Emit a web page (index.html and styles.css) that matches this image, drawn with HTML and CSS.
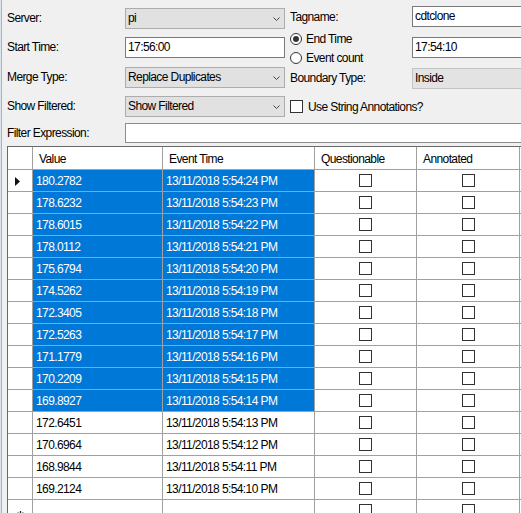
FILE: index.html
```html
<!DOCTYPE html>
<html>
<head>
<meta charset="utf-8">
<link rel="stylesheet" href="styles.css">
</head>
<body>
<div class="page">
  <div class="form">
    <div class="lbl t2">Server:</div>
    <div class="combo t2"><span>pi</span><svg class="chev" width="7" height="4" viewBox="0 0 7 4"><polyline points="0.5,0.5 3.5,3.5 6.5,0.5" fill="none" stroke="#444" stroke-width="1"/></svg></div>
    <div class="lbl t1">Tagname:</div>
    <div class="txt wide">cdtclone</div>

    <div class="lbl t8">Start Time:</div>
    <div class="txt t8">17:56:00</div>
    <div class="radios">
      <div class="opt"><span class="radio on"></span>End Time</div>
      <div class="opt"><span class="radio"></span>Event count</div>
    </div>
    <div class="txt wide t8">17:54:10</div>

    <div class="lbl t4">Merge Type:</div>
    <div class="combo t4"><span>Replace Duplicates</span><svg class="chev" width="7" height="4" viewBox="0 0 7 4"><polyline points="0.5,0.5 3.5,3.5 6.5,0.5" fill="none" stroke="#444" stroke-width="1"/></svg></div>
    <div class="lbl t5">Boundary Type:</div>
    <div class="combo disabled wide t5"><span>Inside</span></div>

    <div class="lbl t4">Show Filtered:</div>
    <div class="combo t4"><span>Show Filtered</span><svg class="chev" width="7" height="4" viewBox="0 0 7 4"><polyline points="0.5,0.5 3.5,3.5 6.5,0.5" fill="none" stroke="#444" stroke-width="1"/></svg></div>
    <div class="opt chk-opt t4"><span class="check"></span>Use String Annotations?</div>
    <div></div>

    <div class="lbl t4">Filter Expression:</div>
    <div class="txt filter t4"></div>
  </div>

  <div class="grid">
    <div class="row head">
      <div class="rh"></div><div class="val">Value</div><div class="evt">Event Time</div><div class="q">Questionable</div><div class="a">Annotated</div><div class="x"></div>
    </div>
    <div class="row sel">
      <div class="rh"><svg class="cur" width="5" height="9" viewBox="0 0 5 9"><polygon points="0,0 5,4.5 0,9" fill="#111"/></svg></div><div class="val">180.2782</div><div class="evt">13/11/2018 5:54:24 PM</div><div class="q"><span class="check"></span></div><div class="a"><span class="check"></span></div><div class="x"></div>
    </div>
    <div class="row sel">
      <div class="rh"></div><div class="val">178.6232</div><div class="evt">13/11/2018 5:54:23 PM</div><div class="q"><span class="check"></span></div><div class="a"><span class="check"></span></div><div class="x"></div>
    </div>
    <div class="row sel">
      <div class="rh"></div><div class="val">178.6015</div><div class="evt">13/11/2018 5:54:22 PM</div><div class="q"><span class="check"></span></div><div class="a"><span class="check"></span></div><div class="x"></div>
    </div>
    <div class="row sel">
      <div class="rh"></div><div class="val">178.0112</div><div class="evt">13/11/2018 5:54:21 PM</div><div class="q"><span class="check"></span></div><div class="a"><span class="check"></span></div><div class="x"></div>
    </div>
    <div class="row sel">
      <div class="rh"></div><div class="val">175.6794</div><div class="evt">13/11/2018 5:54:20 PM</div><div class="q"><span class="check"></span></div><div class="a"><span class="check"></span></div><div class="x"></div>
    </div>
    <div class="row sel">
      <div class="rh"></div><div class="val">174.5262</div><div class="evt">13/11/2018 5:54:19 PM</div><div class="q"><span class="check"></span></div><div class="a"><span class="check"></span></div><div class="x"></div>
    </div>
    <div class="row sel">
      <div class="rh"></div><div class="val">172.3405</div><div class="evt">13/11/2018 5:54:18 PM</div><div class="q"><span class="check"></span></div><div class="a"><span class="check"></span></div><div class="x"></div>
    </div>
    <div class="row sel">
      <div class="rh"></div><div class="val">172.5263</div><div class="evt">13/11/2018 5:54:17 PM</div><div class="q"><span class="check"></span></div><div class="a"><span class="check"></span></div><div class="x"></div>
    </div>
    <div class="row sel">
      <div class="rh"></div><div class="val">171.1779</div><div class="evt">13/11/2018 5:54:16 PM</div><div class="q"><span class="check"></span></div><div class="a"><span class="check"></span></div><div class="x"></div>
    </div>
    <div class="row sel">
      <div class="rh"></div><div class="val">170.2209</div><div class="evt">13/11/2018 5:54:15 PM</div><div class="q"><span class="check"></span></div><div class="a"><span class="check"></span></div><div class="x"></div>
    </div>
    <div class="row sel">
      <div class="rh"></div><div class="val">169.8927</div><div class="evt">13/11/2018 5:54:14 PM</div><div class="q"><span class="check"></span></div><div class="a"><span class="check"></span></div><div class="x"></div>
    </div>
    <div class="row">
      <div class="rh"></div><div class="val">172.6451</div><div class="evt">13/11/2018 5:54:13 PM</div><div class="q"><span class="check"></span></div><div class="a"><span class="check"></span></div><div class="x"></div>
    </div>
    <div class="row">
      <div class="rh"></div><div class="val">170.6964</div><div class="evt">13/11/2018 5:54:12 PM</div><div class="q"><span class="check"></span></div><div class="a"><span class="check"></span></div><div class="x"></div>
    </div>
    <div class="row">
      <div class="rh"></div><div class="val">168.9844</div><div class="evt">13/11/2018 5:54:11 PM</div><div class="q"><span class="check"></span></div><div class="a"><span class="check"></span></div><div class="x"></div>
    </div>
    <div class="row">
      <div class="rh"></div><div class="val">169.2124</div><div class="evt">13/11/2018 5:54:10 PM</div><div class="q"><span class="check"></span></div><div class="a"><span class="check"></span></div><div class="x"></div>
    </div>
    <div class="row">
      <div class="rh"><svg class="star" width="7" height="7" viewBox="0 0 7 7"><path d="M3.5 0V7M0.5 1.8L6.5 5.2M0.5 5.2L6.5 1.8" stroke="#222" stroke-width="1.3"/></svg></div><div class="val"></div><div class="evt"></div><div class="q"><span class="check"></span></div><div class="a"><span class="check"></span></div><div class="x"></div>
    </div>
  </div>
</div>
</body>
</html>
```

FILE: styles.css
```css
* {
  box-sizing: border-box;
}

body {
  margin: 0;
  font-family: "Liberation Sans", Arial, sans-serif;
  font-size: 12px;
  letter-spacing: -0.6px;
  color: #000;
}

.page {
  width: 521px;
  height: 513px;
  overflow: hidden;
  background: #f0f0f0;
  padding-left: 7px;
  box-shadow: inset 1px 0 #dde3ea, inset 2px 0 #aab4c1;
}

/* ---------- form ---------- */
.form {
  display: grid;
  grid-template-columns: 118px 165px 122px 1fr;
  grid-template-rows: 23px 34px 29px 27px 27px;
  align-items: start;
  padding-top: 6px;
  height: 146px;
}

.lbl {
  height: 21px;
  line-height: 21px;
  white-space: nowrap;
}

.t1 { margin-top: 1px; }
.t2 { margin-top: 2px; }
.t4 { margin-top: 4px; }
.t5 { margin-top: 5px; }
.t8 { margin-top: 8px; }

.combo {
  width: 160px;
  height: 21px;
  background: #e1e1e1;
  border: 1px solid #adadad;
  display: flex;
  align-items: center;
  justify-content: space-between;
  padding: 0 4px 0 2px;
  line-height: 19px;
  white-space: nowrap;
}

.combo.disabled {
  background: #e3e3e3;
  border-color: #c4c4c4;
}

.chev {
  flex: none;
}

.txt {
  width: 160px;
  height: 21px;
  background: #fff;
  border: 1px solid #7a7a7a;
  padding: 0 2px;
  line-height: 19px;
  white-space: nowrap;
}

.wide {
  width: auto;
  margin-right: -10px;
}

.filter {
  grid-column: span 3;
  width: auto;
  margin-right: -10px;
  height: 20px;
  border-color: #8c8c8c;
}

.radios {
  display: flex;
  flex-direction: column;
}

.opt {
  display: flex;
  align-items: center;
  gap: 4px;
  height: 19px;
  white-space: nowrap;
}

.radio {
  flex: none;
  width: 12px;
  height: 12px;
  border: 1px solid #333;
  border-radius: 50%;
  background: #fff;
  display: flex;
  align-items: center;
  justify-content: center;
}

.radio.on::after {
  content: "";
  width: 6px;
  height: 6px;
  border-radius: 50%;
  background: #333;
}

.check {
  flex: none;
  width: 13px;
  height: 13px;
  border: 1px solid #333;
  background: #fff;
}

.chk-opt {
  height: 21px;
  gap: 5px;
}

/* ---------- data grid ---------- */
.grid {
  width: 640px;
  background: #fff;
  border-top: 1px solid #696969;
  border-left: 1px solid #696969;
}

.row {
  display: flex;
  height: 22px;
}

.row.head {
  height: 23px;
}

.row > div {
  flex: none;
  display: flex;
  align-items: center;
  white-space: nowrap;
  border-right: 1px solid #a0a0a0;
  border-bottom: 1px solid #a0a0a0;
}

.rh { width: 25px; }
.val { width: 130px; padding-left: 3px; }
.evt { width: 152px; padding-left: 3px; }
.q { width: 102px; justify-content: center; }
.a { width: 103px; justify-content: center; }
.x { width: 128px; }

.head > div {
  padding-left: 6px;
  padding-top: 2px;
  justify-content: flex-start;
}

.sel .val,
.sel .evt {
  background: #0078d7;
  color: #fff;
}

.cur {
  margin-left: 7px;
  margin-top: 1px;
}

.star {
  margin-left: 9px;
  margin-top: 8px;
}
```
